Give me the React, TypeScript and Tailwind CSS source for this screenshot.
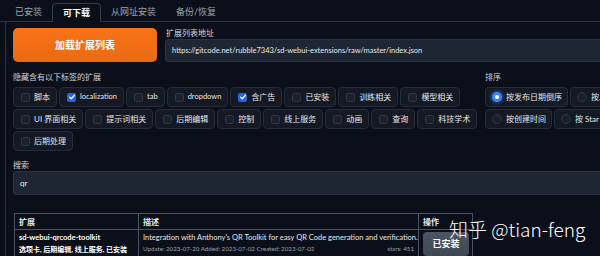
import React from "react";

function Check({ checked }: { checked?: boolean }) {
  return checked ? (
    <span className="flex h-[9px] w-[9px] shrink-0 items-center justify-center rounded-[2px] bg-[#2563eb]">
      <svg viewBox="0 0 10 10" className="h-[8px] w-[8px]">
        <path d="M2 5.2 L4.1 7.2 L8 2.8" fill="none" stroke="white" strokeWidth="1.6" strokeLinecap="round" strokeLinejoin="round" />
      </svg>
    </span>
  ) : (
    <span className="h-[9px] w-[9px] shrink-0 rounded-[2px] border border-[#2e3645] bg-[#1a202c]" />
  );
}

function Chip({ label, checked, latin }: { label: string; checked?: boolean; latin?: boolean }) {
  return (
    <div className="flex h-[20px] shrink-0 items-center gap-[4px] rounded-[4px] border border-[#262d3a] bg-[#141923] pl-[7px] pr-[6px] text-[#e5e7eb]">
      <Check checked={checked} />
      <span className={latin ? "whitespace-nowrap text-[7.5px] leading-none" : "whitespace-nowrap text-[8px] leading-none"}>
        {label}
      </span>
    </div>
  );
}

function Radio({ label, selected }: { label: string; selected?: boolean }) {
  return (
    <div className="flex h-[20px] shrink-0 items-center gap-[4px] rounded-[4px] border border-[#262d3a] bg-[#141923] pl-[6px] pr-[5px] text-[8px] text-[#e5e7eb]">
      {selected ? (
        <span className="flex h-[10px] w-[10px] items-center justify-center rounded-full bg-[#3b82f6] shadow-[0_0_4px_#3b82f6]">
          <span className="h-[4px] w-[4px] rounded-full bg-white" />
        </span>
      ) : (
        <span className="h-[10px] w-[10px] rounded-full border border-[#2e3645] bg-[#1a202c]" />
      )}
      <span className="whitespace-nowrap leading-none">{label}</span>
    </div>
  );
}

export default function App() {
  const row1: [string, boolean, boolean][] = [
    ["脚本", false, false],
    ["localization", true, true],
    ["tab", false, true],
    ["dropdown", false, true],
    ["含广告", true, false],
    ["已安装", false, false],
    ["训练相关", false, false],
    ["模型相关", false, false],
  ];
  const row2: [string, boolean, boolean][] = [
    ["UI 界面相关", false, false],
    ["提示词相关", false, false],
    ["后期编辑", false, false],
    ["控制", false, false],
    ["线上服务", false, false],
    ["动画", false, false],
    ["查询", false, false],
    ["科技学术", false, false],
  ];
  return (
    <div className="relative h-[256px] w-[600px] overflow-hidden bg-[#0b0f19] font-['Lato','Noto_Sans_CJK_SC',sans-serif] text-[#e5e7eb]">
      {/* tabs */}
      <div className="flex h-[22px] items-end border-b border-[#2b3240] pl-[5px] text-[9px]">
        <div className="flex h-[18px] items-center px-[10px] text-[#9ca3af]">已安装</div>
        <div className="-mb-px flex h-[19px] items-center rounded-t-[4px] border border-b-0 border-[#343c4b] bg-[#0b0f19] px-[10px] font-semibold text-white">
          可下载
        </div>
        <div className="flex h-[18px] items-center px-[10px] text-[#9ca3af]">从网址安装</div>
        <div className="flex h-[18px] items-center px-[10px] text-[#9ca3af]">备份/恢复</div>
      </div>

      {/* panel */}
      <div className="ml-[5px] h-[240px] border-l border-[#2b3240] pl-[7px] pt-[6px]">
        <div className="flex gap-[8px]">
          <div className="flex h-[34px] w-[144px] shrink-0 items-center justify-center rounded-[5px] bg-gradient-to-b from-[#f97316] to-[#ea6a12] text-[10px] font-bold text-white">
            加载扩展列表
          </div>
          <div className="flex flex-1 flex-col">
            <div className="h-[11px] pl-[1px] text-[8px] leading-[11px] text-[#d1d5db]">扩展列表地址</div>
            <div className="flex h-[23px] items-center rounded-l-[4px] border border-r-0 border-[#2b3342] bg-[#1f2633] pl-[6px] text-[7.5px] text-[#e5e7eb]">
              https://gitcode.net/rubble7343/sd-webui-extensions/raw/master/index.json
            </div>
          </div>
        </div>

        <div className="mt-[10px] flex gap-[8px]">
          <div className="w-[464px] shrink-0">
            <div className="mb-[4px] h-[11px] text-[8px] leading-[11px] text-[#d1d5db]">隐藏含有以下标签的扩展</div>
            <div className="flex flex-col gap-[2px]">
              <div className="flex gap-[2px]">
                {row1.map(([l, c, lt]) => (
                  <Chip key={l} label={l} checked={c} latin={lt} />
                ))}
              </div>
              <div className="flex gap-[2px]">
                {row2.map(([l, c, lt]) => (
                  <Chip key={l} label={l} checked={c} latin={lt} />
                ))}
              </div>
              <div className="flex gap-[2px]">
                <Chip label="后期处理" />
              </div>
            </div>
          </div>
          <div className="min-w-0 flex-1 overflow-hidden">
            <div className="mb-[4px] h-[11px] text-[8px] leading-[11px] text-[#d1d5db]">排序</div>
            <div className="flex flex-col gap-[2px]">
              <div className="flex gap-[2px]">
                <Radio label="按发布日期倒序" selected />
                <Radio label="按发布日期正序" />
              </div>
              <div className="flex gap-[2px]">
                <Radio label="按创建时间" />
                <Radio label="按 Star 数量" />
              </div>
            </div>
          </div>
        </div>

        <div className="mt-[9px] h-[11px] text-[8px] leading-[11px] text-[#d1d5db]">搜索</div>
        <div className="flex h-[24px] items-center rounded-l-[4px] border border-r-0 border-[#2b3342] bg-[#1f2633] pl-[6px] text-[8px] text-[#e5e7eb]">
          qr
        </div>

        {/* table */}
        <div className="mt-[18px] ml-[1px] w-[459px] border border-[#4b5261] text-[8px]">
          <div className="flex h-[16px] border-b border-[#4b5261] font-bold">
            <div className="flex w-[124px] items-center border-r border-[#4b5261] pl-[4px]">扩展</div>
            <div className="flex w-[280px] items-center border-r border-[#4b5261] pl-[4px]">描述</div>
            <div className="flex flex-1 items-center pl-[4px]">操作</div>
          </div>
          <div className="flex h-[30px]">
            <div className="flex w-[124px] flex-col gap-[1px] overflow-hidden border-r border-[#4b5261] pl-[4px] pt-[3px] font-bold leading-[10px] text-white">
              <div className="text-[7.5px]">sd-webui-qrcode-toolkit</div>
              <div className="whitespace-nowrap text-[7px]">选项卡, 后期编辑, 线上服务, 已安装</div>
            </div>
            <div className="flex w-[280px] flex-col gap-[1px] border-r border-[#4b5261] px-[4px] pt-[3px] leading-[10px]">
              <div className="whitespace-nowrap text-[7.5px] text-[#e5e7eb]">
                Integration with Anthony&apos;s QR Toolkit for easy QR Code generation and verification.
              </div>
              <div className="flex justify-between text-[6.2px] text-[#9ca3af]">
                <span>Update: 2023-07-20 Added: 2023-07-02 Created: 2023-07-02</span>
                <span>stars: 451</span>
              </div>
            </div>
            <div className="flex flex-1 items-start pl-[4px] pt-[2px]">
              <div className="flex h-[24px] w-[46px] items-center justify-center rounded-[4px] bg-gradient-to-b from-[#4b5563] to-[#3f4754] text-[9px] font-bold text-white">
                已安装
              </div>
            </div>
          </div>
        </div>
      </div>

      {/* watermark */}
      <div className="absolute left-[449px] top-[216px] whitespace-nowrap font-['Noto_Sans_CJK_SC',sans-serif] text-[19px] font-light leading-[26px] text-white">
        知乎 @tian-feng
      </div>
    </div>
  );
}
